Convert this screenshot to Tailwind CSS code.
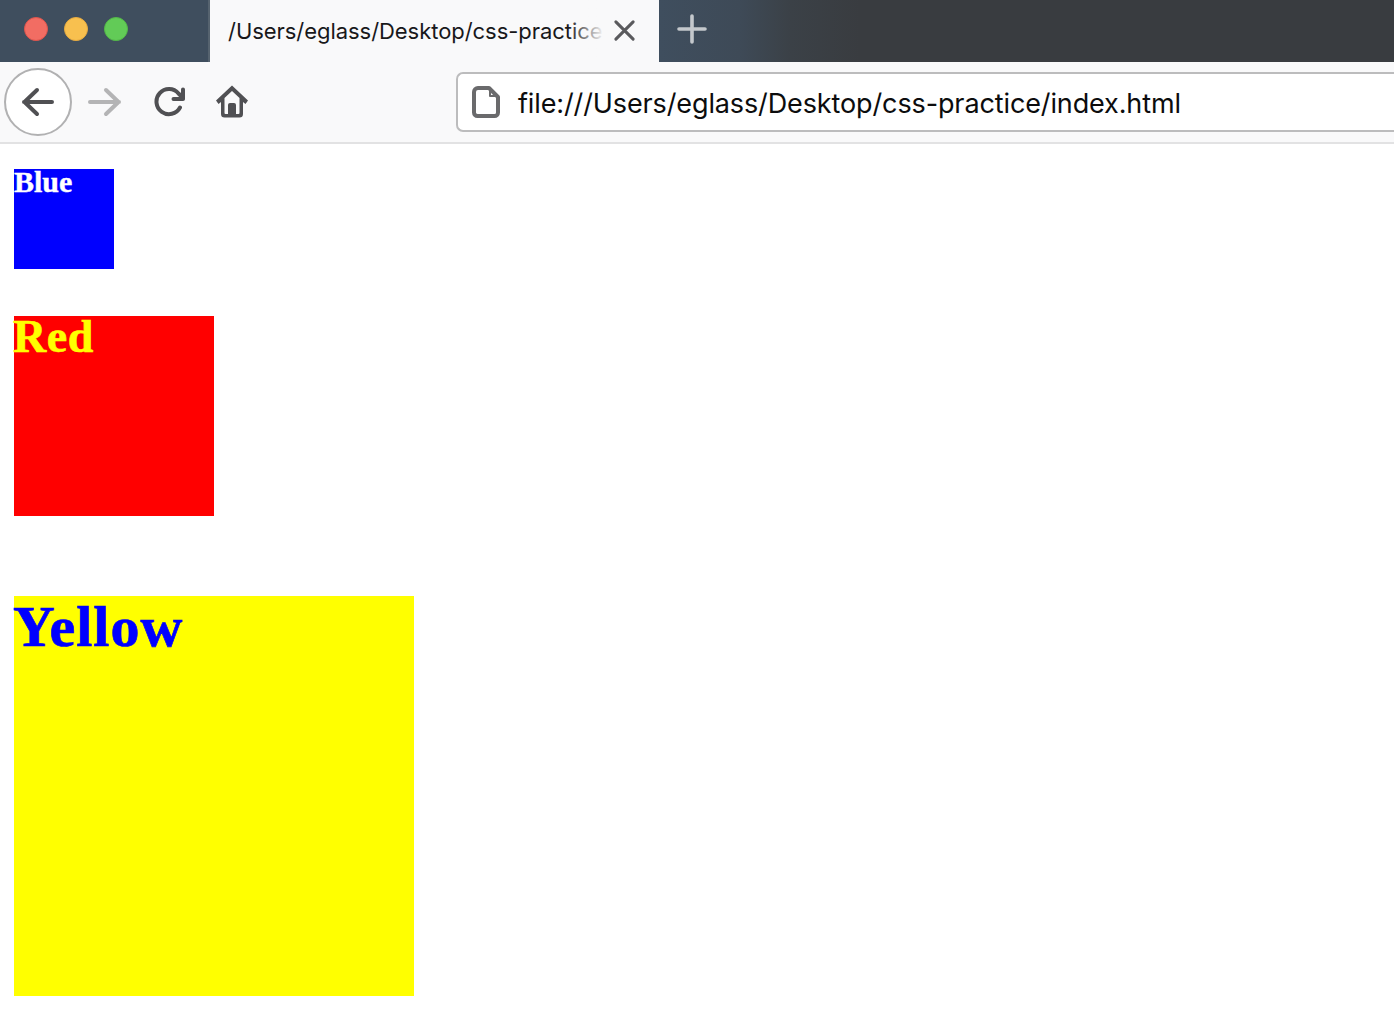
<!DOCTYPE html>
<html lang="en">

<head>
    <meta charset="UTF-8">
    <title>/Users/eglass/Desktop/css-practice</title>
    <script src="https://cdn.jsdelivr.net/npm/@tailwindcss/browser@4"></script>
</head>

<body class="bg-white overflow-hidden">
    <div class="h-[1036px] w-[1394px] overflow-hidden font-['Inter',sans-serif]">
        <!-- tab strip -->
        <div class="flex h-[62px] bg-[linear-gradient(90deg,#3f4e5e_0px,#3f4e5e_660px,#3e4a57_740px,#3b4147_790px,#393c40_860px,#393c40_1394px)]">
            <div class="flex h-full w-[210px] items-center gap-[16px] border-r-2 border-[#56636f] pb-[4px] pl-[24px]">
                <span class="size-[24px] rounded-full border border-[#e0544c] bg-[#f26d63]"></span>
                <span class="size-[24px] rounded-full border border-[#e8ab40] bg-[#f8c04f]"></span>
                <span class="size-[24px] rounded-full border border-[#53b848] bg-[#62cb57]"></span>
            </div>
            <div class="relative flex h-full w-[449px] items-center bg-[#f9f9fa] pl-[18px]">
                <span class="text-[22px] tracking-[-0.05px] whitespace-nowrap text-[#18181a]">/Users/eglass/Desktop/css-practice</span>
                <div class="absolute top-0 left-[358px] h-full w-[36px] bg-gradient-to-r from-[#f9f9fa]/0 to-[#f9f9fa]"></div>
                <svg class="absolute top-[19px] left-[403px]" width="23" height="23" viewBox="0 0 24 24" fill="none" stroke="#5a5a5d" stroke-width="3.2" stroke-linecap="round"><path d="M3 3l18 18M21 3L3 21" /></svg>
            </div>
            <div class="flex h-full w-[66px] items-center justify-center pb-[4px]">
                <svg width="30" height="30" viewBox="0 0 30 30" fill="none" stroke="#c4c8cc" stroke-width="3.6" stroke-linecap="round"><path d="M15 2v26M2 15h26" /></svg>
            </div>
        </div>

        <!-- toolbar -->
        <div class="flex h-[82px] items-center border-b-2 border-[#e2e2e3] bg-[#f9f9fa]">
            <div class="ml-[4px] flex size-[68px] items-center justify-center rounded-full border-2 border-[#b1b1b2] bg-white">
                <svg width="34" height="30" viewBox="0 0 34 30" fill="none" stroke="#505053" stroke-width="4" stroke-linecap="round" stroke-linejoin="round"><path d="M3 15h28M16 3L3.500 15 16 27" /></svg>
            </div>
            <svg class="ml-[16px]" width="34" height="30" viewBox="0 0 34 30" fill="none" stroke="#b4b4b5" stroke-width="4" stroke-linecap="round" stroke-linejoin="round"><path d="M2 15h29M18 3l12.500 12L18 27" /></svg>
            <svg class="ml-[32px]" width="32" height="30" viewBox="0 0 32 30" fill="none" stroke="#505053" stroke-width="4" stroke-linecap="round" stroke-linejoin="round"><path d="M26 20.500A12.500 12.500 0 1 1 24.500 6.500L29 11" /><path d="M29 2.500V12h-9.500" /></svg>
            <svg class="ml-[29px]" width="34" height="34" viewBox="0 0 34 34" fill="#505053"><path fill-rule="evenodd" d="M17 0.500L1 15.500 3.500 19 6 17V29a3.500 3.500 0 0 0 3.500 3.500h15A3.500 3.500 0 0 0 28 29V17l2.500 2 2.500-3.500Zm0 5.500L24.500 13v15a1 1 0 0 1-1 1H21V20a2 2 0 0 0-2-2h-4a2 2 0 0 0-2 2v9h-2.500a1 1 0 0 1-1-1V13Z" /><path d="M15.500 20.500h3a.5.5 0 0 1 .5.5v9h-4v-9a.5.5 0 0 1 .5-.5Z" /></svg>
            <div class="ml-[207px] flex h-[60px] flex-1 items-center rounded-l-[7px] border-2 border-r-0 border-[#bcbcbd] bg-white pl-[14px]">
                <svg width="28" height="32" viewBox="0 0 28 32" fill="none" stroke="#6a6a6c" stroke-width="4" stroke-linejoin="round"><path d="M6 2h11l9 9v15.500a3.500 3.500 0 0 1-3.500 3.500H5.500A3.500 3.500 0 0 1 2 26.500V6a4 4 0 0 1 4-4Z" /><path d="M18 3v7h7" stroke-width="2" /></svg>
                <span class="ml-[18px] pt-[4px] text-[27px] tracking-[-0.12px] whitespace-nowrap text-[#0c0c0d]">file:///Users/eglass/Desktop/css-practice/index.html</span>
            </div>
        </div>

        <!-- page content -->
        <div class="flex flex-col items-start pl-[14px] font-['Liberation_Serif',serif] font-bold">
            <div class="mt-[25px] size-[100px] bg-[#0000ff] text-[30px] leading-[26px] text-white [-webkit-text-stroke:0.4px]">Blue</div>
            <div class="mt-[47px] size-[200px] bg-[#ff0000] text-[46px] leading-[42px] tracking-[0.6px] text-[#ffff00] [-webkit-text-stroke:0.6px]"><span class="-ml-px">Red</span></div>
            <div class="mt-[80px] size-[400px] bg-[#ffff00] text-[58px] leading-[62px] tracking-[1px] text-[#0000ff] [-webkit-text-stroke:0.7px]"><span class="-ml-px">Yellow</span></div>
        </div>
    </div>
</body>

</html>
